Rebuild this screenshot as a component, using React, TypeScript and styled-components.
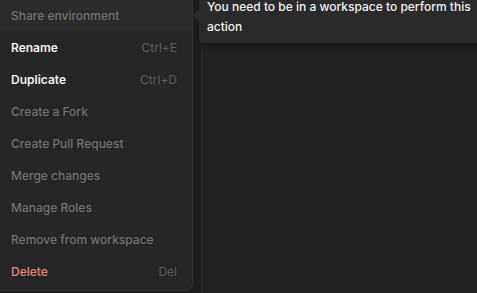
import styled, { createGlobalStyle, css } from 'styled-components'

const GlobalStyle = createGlobalStyle`
  html, body {
    margin: 0;
    padding: 0;
    background: #1e1e1e;
    font-family: Inter, "Noto Sans", "Liberation Sans", sans-serif;
    -webkit-font-smoothing: antialiased;
  }
`

const Screen = styled.div`
  position: relative;
  width: 477px;
  height: 293px;
  display: flex;
  overflow: hidden;
  background: #1e1e1e;
`

const Menu = styled.ul`
  list-style: none;
  margin: -1px 0 0;
  padding: 0 0 2px;
  width: 193px;
  height: 292px;
  box-sizing: border-box;
  background: #262626;
  border-right: 1px solid #333333;
  border-bottom: 1px solid #303030;
  border-bottom-right-radius: 7px;
  display: flex;
  flex-direction: column;
`

type Tone = 'default' | 'muted' | 'danger'

const Item = styled.li<{ $tone: Tone; $hover?: boolean }>`
  height: 32px;
  flex: none;
  display: flex;
  align-items: center;
  justify-content: space-between;
  padding: 0 15px 0 11px;
  font-size: 12px;
  font-weight: 500;
  color: #727272;
  ${({ $tone }) =>
    $tone === 'default' &&
    css`
      color: #f2f2f2;
      font-weight: 600;
    `}
  ${({ $tone }) =>
    $tone === 'danger' &&
    css`
      color: #e8867b;
    `}
  ${({ $hover }) =>
    $hover &&
    css`
      background: #2b2b2b;
    `}
`

const Shortcut = styled.span`
  font-size: 12px;
  font-weight: 400;
  color: #5c5c5c;
`

const Gutter = styled.div`
  width: 8px;
  flex: none;
  background: #1f1f1f;
  border-right: 1px solid #2a2a2a;
`

const Main = styled.div`
  flex: 1;
  background: #222222;
`

const Tooltip = styled.div`
  position: absolute;
  left: 199px;
  top: -3px;
  right: -6px;
  padding: 0 10px 6px 8px;
  background: #2a2a2a;
  border-radius: 4px;
  box-shadow: 0 3px 6px rgba(0, 0, 0, 0.35);
  color: #f2f2f2;
  font-size: 12px;
  font-weight: 500;
  line-height: 20px;

  &::before {
    content: '';
    position: absolute;
    left: -6px;
    top: 12px;
    border-top: 6px solid transparent;
    border-bottom: 6px solid transparent;
    border-right: 6px solid #2a2a2a;
  }
`

const items: { label: string; tone: Tone; shortcut?: string; hover?: boolean }[] = [
  { label: 'Share environment', tone: 'muted', hover: true },
  { label: 'Rename', tone: 'default', shortcut: 'Ctrl+E' },
  { label: 'Duplicate', tone: 'default', shortcut: 'Ctrl+D' },
  { label: 'Create a Fork', tone: 'muted' },
  { label: 'Create Pull Request', tone: 'muted' },
  { label: 'Merge changes', tone: 'muted' },
  { label: 'Manage Roles', tone: 'muted' },
  { label: 'Remove from workspace', tone: 'muted' },
  { label: 'Delete', tone: 'danger', shortcut: 'Del' },
]

export default function App() {
  return (
    <>
      <GlobalStyle />
      <Screen>
        <Menu>
          {items.map((it) => (
            <Item key={it.label} $tone={it.tone} $hover={it.hover}>
              <span>{it.label}</span>
              {it.shortcut && <Shortcut>{it.shortcut}</Shortcut>}
            </Item>
          ))}
        </Menu>
        <Gutter />
        <Main />
        <Tooltip>You need to be in a workspace to perform this action</Tooltip>
      </Screen>
    </>
  )
}
